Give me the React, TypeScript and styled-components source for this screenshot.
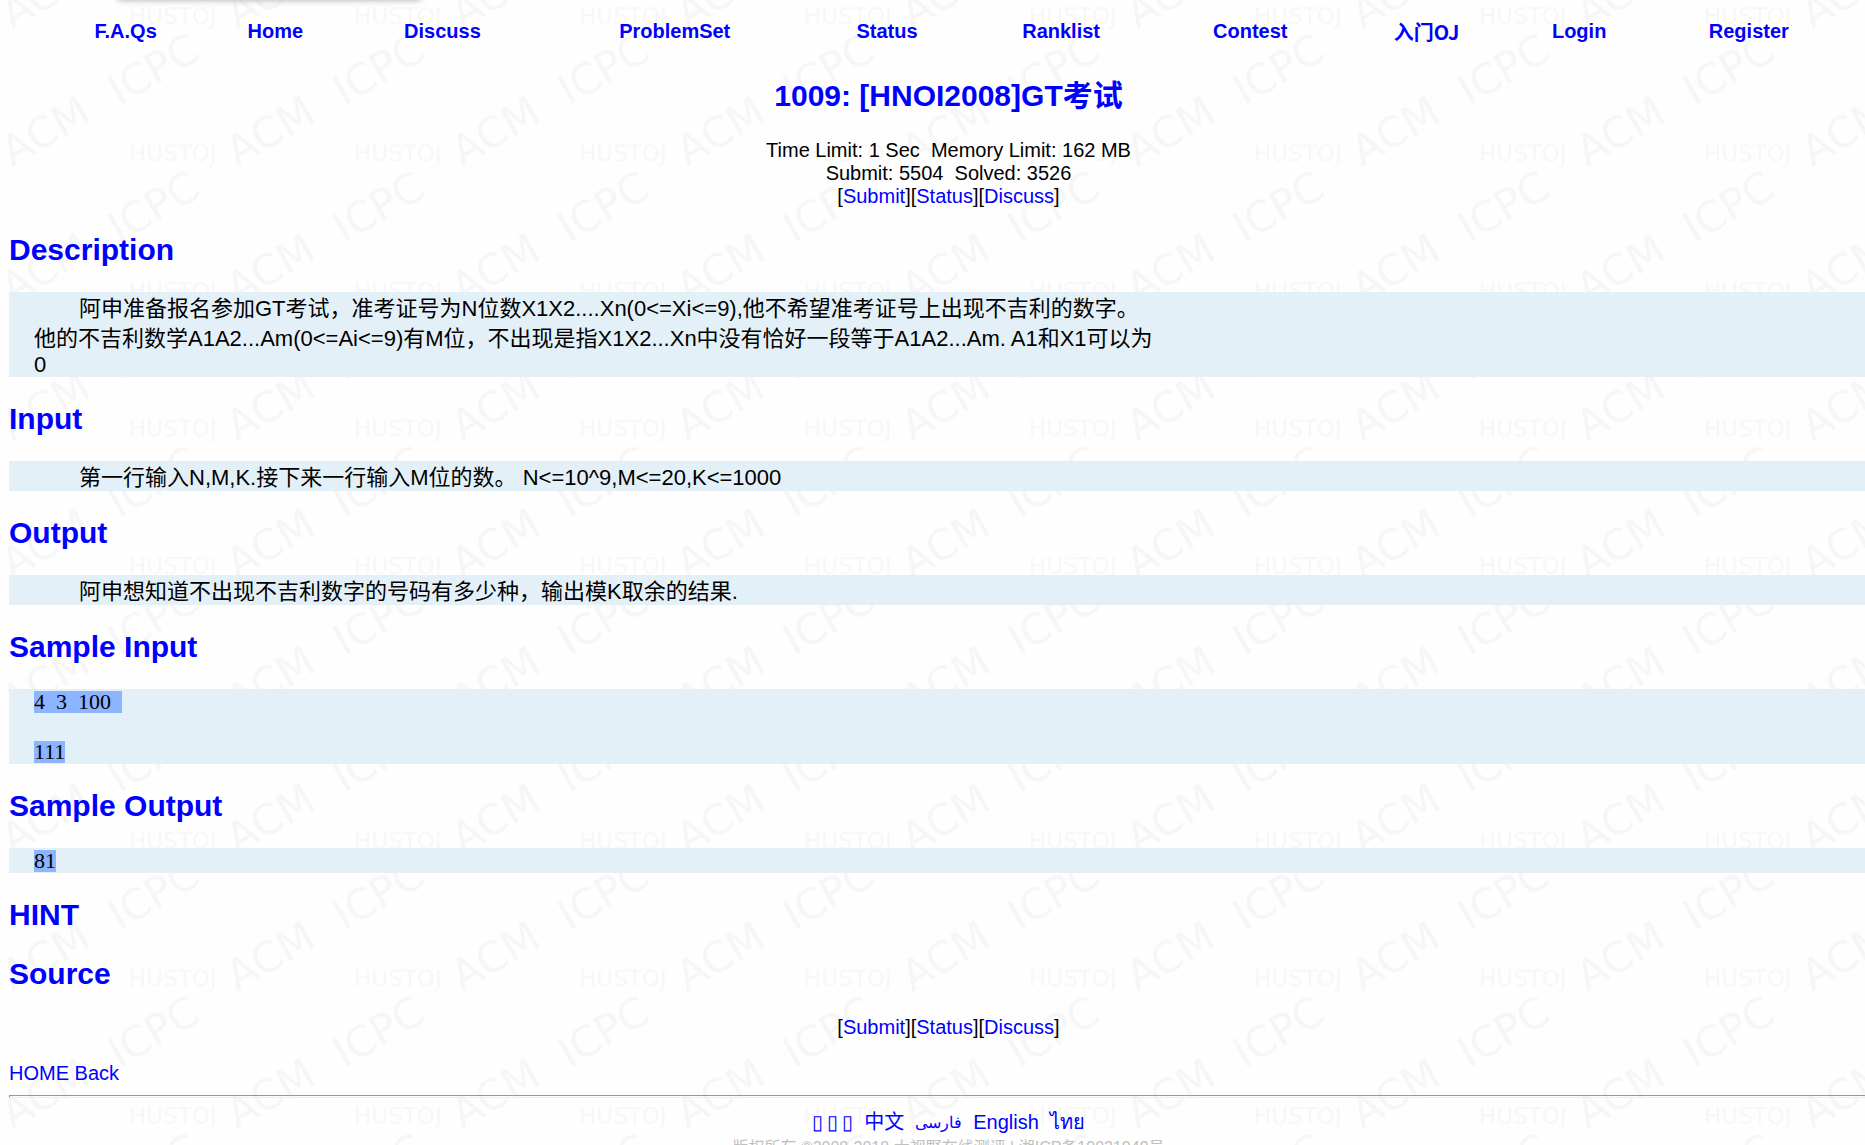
import React from "react";
import styled, { createGlobalStyle } from "styled-components";

const sans = `"Liberation Sans", Arial, "Noto Sans CJK SC", sans-serif`;

const GlobalStyle = createGlobalStyle`
  body {
    margin: 0;
    background: #fefefe;
    color: #000;
    font: 20px/23px ${sans};
  }
`;

const Page = styled.div`
  position: relative;
  height: 100vh;
  overflow: hidden;
`;

const Backdrop = styled.svg`
  position: absolute;
  inset: 0;
  width: 100%;
  height: 100%;
  pointer-events: none;
`;

const Content = styled.div`
  position: relative;
  margin: 0 -23px 0 9px;
`;

const Banner = styled.div`
  position: absolute;
  top: -8px;
  left: 108px;
  width: 304px;
  height: 8px;
  border-radius: 4px;
  box-shadow: 0 0 6px #aaa;
`;

const Link = styled.a`
  color: #00f;
  text-decoration: none;
`;

const Nav = styled.nav`
  display: flex;
  align-items: center;
  width: 96%;
  height: 29px;
  margin: 0 auto;
  padding-top: 17px;
`;

const NavItem = styled.div<{ $grow: number }>`
  flex: ${(p) => p.$grow} 1 0;
  text-align: center;
  font-weight: bold;
`;

const CjkLink = styled(Link)`
  font-family: "Noto Sans CJK SC", sans-serif;
  line-height: 29px;
`;

const Title = styled.h1`
  margin: 32px 0 26px;
  color: #00f;
  font-size: 30px;
  line-height: 35px;
  text-align: center;
`;

const Centered = styled.div`
  text-align: center;
  white-space: pre-wrap;
`;

const Heading = styled.h2`
  margin: 25px 0;
  color: #00f;
  font-size: 30px;
  line-height: 34px;
`;

const Panel = styled.div`
  padding-left: 25px;
  background: #e4f0f8;
  font-size: 22px;
  line-height: 26px;
`;

const Line = styled.p<{ $indent?: boolean; $latin?: boolean }>`
  margin: 0;
  padding-top: ${(p) => (p.$latin ? "0" : "4px")};
  padding-left: ${(p) => (p.$indent ? "45px" : "0")};
  line-height: ${(p) => (p.$latin ? "25px" : "26px")};
`;

const Sample = styled.pre`
  margin: 0;
  padding-left: 25px;
  background: #e4f0f8;
  font: 22px/25px "Liberation Serif", "Times New Roman", serif;
`;

const Selected = styled.mark`
  display: inline-block;
  background: #8cb4ff;
  color: #000;
  line-height: 22px;
`;

const BackLinks = styled.div`
  margin-top: 23px;
`;

const Rule = styled.hr`
  height: 1px;
  margin: 10px 0;
  border: 1px solid #eee;
  border-top-color: #999;
  border-left-color: #999;
`;

const Languages = styled.div`
  display: flex;
  justify-content: center;
  gap: 11px;
  margin-top: 13px;
`;

const LanguageLink = styled(Link)<{ $small?: boolean }>`
  display: flex;
  gap: 4px;
  font-size: ${(p) => (p.$small ? "16px" : "20px")};
`;

const Copyright = styled.footer`
  margin-top: 2px;
  color: #c0c0c0;
  font-size: 16px;
  text-align: center;
`;

const navItems = [
  { label: "F.A.Qs", grow: 158 },
  { label: "Home", grow: 141 },
  { label: "Discuss", grow: 193 },
  { label: "ProblemSet", grow: 271 },
  { label: "Status", grow: 153 },
  { label: "Ranklist", grow: 195 },
  { label: "Contest", grow: 183 },
  { label: "入门OJ", grow: 169, cjk: true },
  { label: "Login", grow: 136 },
  { label: "Register", grow: 203 },
];

const languages = [
  { parts: ["▯", "▯", "▯"] },
  { parts: ["中文"] },
  { parts: ["فارسی"], small: true },
  { parts: ["English"] },
  { parts: ["ไทย"] },
];

function Watermark() {
  return (
    <Backdrop aria-hidden="true">
      <defs>
        <pattern id="mark" width="225" height="137.5" patternUnits="userSpaceOnUse">
          <g fill="#f6f6f6" fontFamily="DejaVu Sans, sans-serif">
            <text x="129" y="24" fontSize="23" fill="#f7f7f7">HUSTOJ</text>
            <g fontSize="42">
              <text transform="translate(119 106) rotate(-30)">ICPC</text>
              <text transform="translate(12 167) rotate(-30)">ACM</text>
              <text transform="translate(12 29.5) rotate(-30)">ACM</text>
            </g>
          </g>
        </pattern>
      </defs>
      <rect width="100%" height="100%" fill="url(#mark)" />
    </Backdrop>
  );
}

function Actions() {
  return (
    <Centered>
      [<Link href="#submit">Submit</Link>][<Link href="#status">Status</Link>][
      <Link href="#discuss">Discuss</Link>]
    </Centered>
  );
}

export default function App() {
  return (
    <Page>
      <GlobalStyle />
      <Watermark />
      <Content>
        <Banner />
        <Nav>
          {navItems.map((n) => (
            <NavItem key={n.label} $grow={n.grow}>
              {n.cjk ? <CjkLink href="#oj">{n.label}</CjkLink> : <Link href="#nav">{n.label}</Link>}
            </NavItem>
          ))}
        </Nav>
        <main>
          <Title>1009: [HNOI2008]GT考试</Title>
          <Centered>Time Limit: 1 Sec  Memory Limit: 162 MB</Centered>
          <Centered>Submit: 5504  Solved: 3526</Centered>
          <Actions />
          <Heading>Description</Heading>
          <Panel>
            <Line $indent>阿申准备报名参加GT考试，准考证号为N位数X1X2....Xn(0&lt;=Xi&lt;=9),他不希望准考证号上出现不吉利的数字。</Line>
            <Line>他的不吉利数学A1A2...Am(0&lt;=Ai&lt;=9)有M位，不出现是指X1X2...Xn中没有恰好一段等于A1A2...Am. A1和X1可以为</Line>
            <Line $latin>0</Line>
          </Panel>
          <Heading>Input</Heading>
          <Panel>
            <Line $indent>第一行输入N,M,K.接下来一行输入M位的数。 N&lt;=10^9,M&lt;=20,K&lt;=1000</Line>
          </Panel>
          <Heading>Output</Heading>
          <Panel>
            <Line $indent>阿申想知道不出现不吉利数字的号码有多少种，输出模K取余的结果.</Line>
          </Panel>
          <Heading>Sample Input</Heading>
          <Sample>
            <Selected>{"4  3  100  "}</Selected>
            {"\n\n"}
            <Selected>111</Selected>
          </Sample>
          <Heading>Sample Output</Heading>
          <Sample>
            <Selected>81</Selected>
          </Sample>
          <Heading>HINT</Heading>
          <Heading>Source</Heading>
          <Actions />
        </main>
        <BackLinks>
          <Link href="#home">HOME</Link> <Link href="#back">Back</Link>
        </BackLinks>
        <Rule />
        <Languages>
          {languages.map((l) => (
            <LanguageLink key={l.parts[0]} href="#lang" $small={l.small}>
              {l.parts.map((part, i) => (
                <span key={i}>{part}</span>
              ))}
            </LanguageLink>
          ))}
        </Languages>
        <Copyright>版权所有 ©2008-2018 大视野在线测评 | 湘ICP备19021049号</Copyright>
      </Content>
    </Page>
  );
}
